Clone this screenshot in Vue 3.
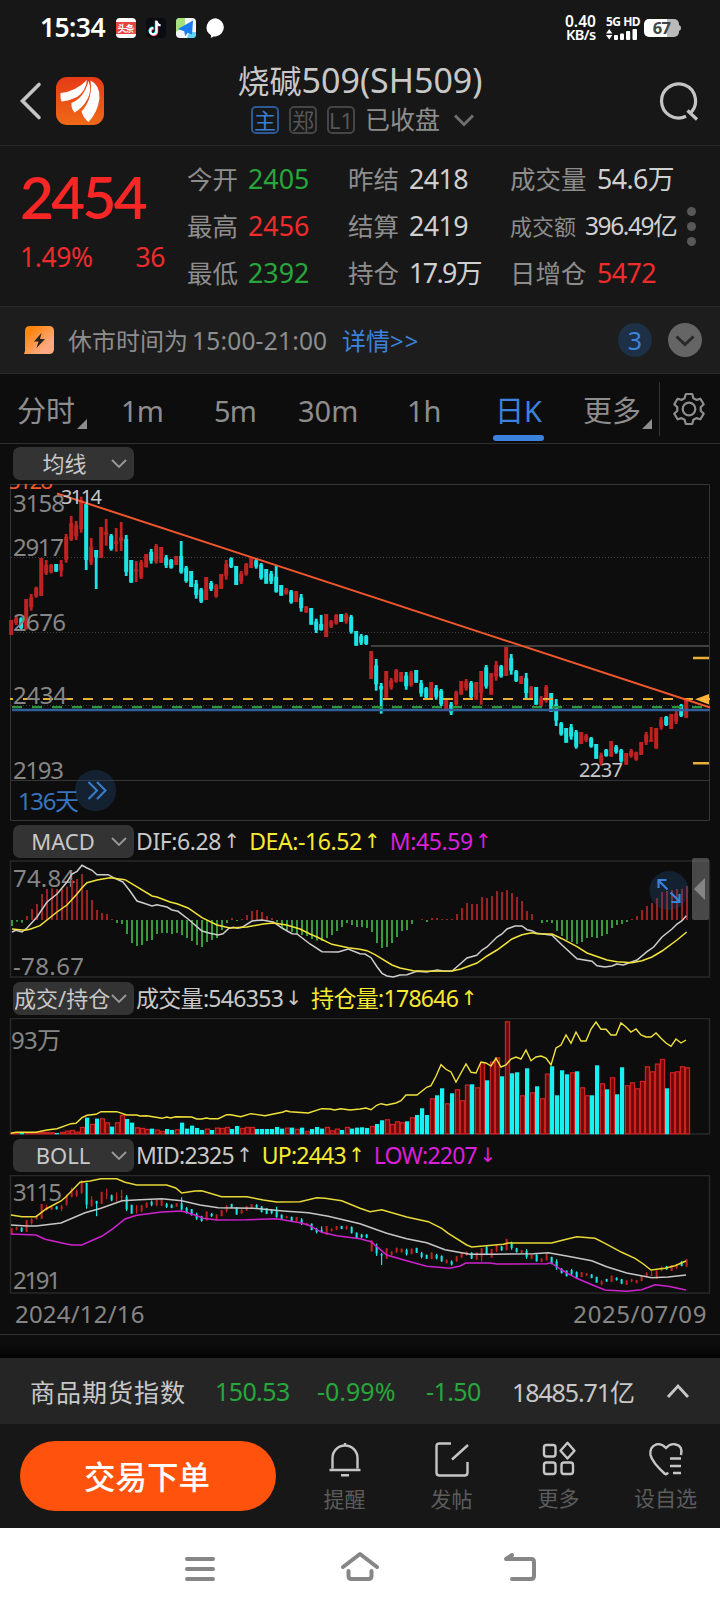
<script setup>
// [high, low, rising] per trading day, in thirds of a pixel below the panel origin
const raw = `420 465 R,408 435 R,412 448 C,357 448 R,342 392 R,320 353 R,234 348 R,240 285 R,252 280 R,252 275 C,240 290 R,162 248 R,108 183 R,123 180 R,50 158 R,72 270 C,174 255 R,210 327 C,141 234 R,117 197 R,162 212 C,144 215 R,126 213 R,165 288 C,240 308 C,243 306 R,240 297 R,222 262 R,207 251 C,192 251 R,201 249 R,225 264 C,237 266 C,228 255 R,183 281 C,258 308 C,273 321 C,300 356 C,324 369 C,291 360 R,303 333 C,312 353 R,282 327 R,240 299 R,232 264 C,258 315 C,273 312 R,249 287 R,234 264 R,235 266 C,249 299 C,267 311 C,273 312 C,255 338 C,315 347 C,324 344 R,330 371 C,333 366 R,342 395 C,378 399 R,384 434 C,416 459 C,405 452 C,402 471 R,420 444 R,402 434 R,402 426 C,399 431 R,405 461 C,453 497 C,462 495 C,465 495 C,513 597 R,537 632 C,609 701 C,573 653 R,594 629 R,567 608 R,576 605 R,576 629 C,573 620 R,570 608 C,600 650 C,621 656 C,606 656 R,615 659 C,627 678 C,660 688 R,666 705 C,632 677 R,603 644 R,597 632 R,603 656 C,606 659 R,573 674 R,555 626 C,579 644 R,543 602 R,555 593 C,501 588 R,522 584 C,570 606 C,588 612 R,579 654 C,618 657 R,621 674 C,648 680 R,615 668 R,639 695 C,657 738 C,726 767 C,744 788 C,732 779 C,750 806 C,756 792 R,762 786 R,771 803 C,792 836 C,818 857 R,807 830 C,783 830 R,795 821 C,807 848 C,819 854 R,807 833 R,815 842 R,786 825 R,756 795 R,741 785 R,744 806 R,711 749 R,708 738 C,702 747 R,693 732 R,672 711 C,657 714 R`
// days whose body is much shorter than the wick
const bodies = { 7: [255, 280], 10: [252, 272], 12: [130, 178], 15: [72, 240], 16: [200, 248], 17: [210, 232], 19: [155, 165], 21: [184, 192], 22: [172, 184], 25: [268, 274], 34: [228, 277], 53: [290, 335], 62: [432, 450], 74: [618, 628], 94: [573, 638], 128: [779, 785] }
const candles = raw.split(',').map((s, i) => {
  const [h, l, c] = s.split(' ')
  const hi = +h, lo = +l, pad = (lo - hi) * [0, 0.2, 0.1][i % 3]
  const [bt, bb] = bodies[i] || [hi + pad, lo - pad]
  return { x: 11.2 + 5 * i, hi: 480 + hi / 3, lo: 480 + lo / 3, bt: 480 + bt / 3, bb: 480 + bb / 3, up: c === 'R' }
})
const bollY = y => 1180 + (y - 496.7) * 0.3916

const hist = [-18,-5,-8,12,33,48,78,93,95,93,93,100,120,123,138,90,60,30,21,18,3,-9,-12,-42,-69,-78,-75,-63,-60,-42,-39,-39,-42,-39,-45,-54,-63,-75,-81,-66,-60,-54,-30,-9,6,-3,3,15,27,30,24,12,6,-8,-24,-30,-36,-42,-45,-48,-57,-62,-63,-54,-45,-33,-21,-9,-15,-21,-21,-24,-36,-69,-84,-81,-69,-51,-33,-30,-12,0,3,-6,6,6,3,3,3,18,36,51,48,48,69,66,72,87,84,90,81,69,57,27,18,0,-9,-6,-9,-33,-48,-60,-66,-72,-66,-54,-51,-54,-48,-42,-24,-15,-12,-6,3,12,30,42,51,66,84,87,90,93,93,102]
const vols = [5,5,4,5,6,6,7,7,6,4,7,11,13,8,22,50,31,47,48,36,23,36,58,46,35,21,19,16,17,14,10,16,13,15,35,17,26,19,13,17,13,20,19,22,16,25,19,22,22,16,16,16,16,22,17,20,20,16,20,10,16,22,17,22,12,17,13,22,17,20,21,19,25,31,42,45,31,39,36,39,51,58,78,58,108,117,138,93,123,135,102,149,150,141,216,162,218,231,174,339,183,186,117,198,126,144,108,182,204,117,192,180,186,189,141,117,117,207,153,135,171,120,201,147,156,138,160,204,189,212,226,138,186,189,204,201]
const volUp = i => (i === 112 || i === 134 ? true : candles[i].up)

// joins "x,y" pairs of the left and right half of a panel into polyline points
function line(left, right, y0) {
  const conv = (s, dx) => s.trim().split(' ').map(p => { const [x, y] = p.split(',').map(Number); return `${(dx + x / 3).toFixed(1)},${(y0 + y / 3).toFixed(1)}` })
  return [...conv(left, 0), ...conv(right, 360)].join(' ')
}
const dif = line('36,336 48,331 66,336 81,324 111,291 141,246 171,222 201,186 216,162 231,154 246,136 261,144 276,151 291,164 324,164 345,175 369,186 390,213 411,243 432,250 456,258 471,254 501,261 516,270 534,274 564,297 606,333 630,340 654,345 669,341 687,325 700,322 712,325 726,322 756,303 786,300 820,306 846,324 876,341 891,342 930,372 966,395 1015,396 1045,387',
  '0,401 15,402 33,413 51,440 66,460 81,468 100,471 120,465 141,464 170,454 200,456 232,450 250,453 276,453 291,440 321,414 350,406 366,390 381,381 411,351 426,342 441,327 465,318 486,318 501,329 516,332 531,340 576,346 606,375 651,416 696,424 711,437 735,441 756,438 770,432 790,435 831,420 861,395 881,381 906,351 936,327 951,312 966,302 979,287', 820)
const dea = line('36,327 75,331 90,328 120,317 171,276 201,255 231,222 246,203 261,188 291,180 330,173 375,179 405,197 456,228 471,231 510,246 531,251 564,264 606,293 651,315 690,324 740,321 790,312 820,309 860,315 900,327 930,342 951,351 996,373 1045,383',
  '0,388 21,392 45,404 96,435 120,444 160,452 200,454 276,453 303,447 351,429 381,408 411,390 456,357 486,344 516,338 531,341 576,342 606,356 651,380 681,399 741,420 771,425 816,428 846,422 876,411 906,393 951,360 980,336', 820)
const oi = line('33,355 48,352 108,352 141,345 171,341 213,326 228,325 246,308 261,301 288,298 303,290 350,290 380,300 410,300 420,303 440,302 486,310 500,306 512,309 527,305 575,306 590,312 605,312 619,309 630,311 655,311 680,299 692,299 722,305 753,296 795,302 850,291 858,287 870,290 925,294 965,281 990,282 1004,285 1022,281 1050,285',
  '0,282 18,279 33,284 50,271 63,266 80,270 108,264 123,257 138,240 171,240 200,217 213,212 228,184 243,149 258,163 273,171 288,201 303,174 318,147 333,172 348,174 363,141 378,144 393,153 408,130 423,156 438,150 453,132 468,126 483,132 498,105 513,137 528,126 543,123 558,129 573,150 588,99 603,90 618,60 633,85 648,51 663,78 678,78 693,42 708,21 723,43 738,43 753,60 768,60 783,24 798,36 813,51 828,42 843,60 858,66 873,66 888,54 903,70 918,84 933,94 948,72 963,84 978,75', 1015)
const up = line('33,600 66,605 108,605 138,582 183,558 198,545 240,502 270,498 303,491 350,491 375,502 410,510 500,510 527,519 545,534 585,528 605,527 665,545 740,545 790,555 830,561 900,560 950,548 975,550 1025,557',
  '0,580 30,590 65,584 140,606 205,620 245,640 265,655 320,690 335,696 430,688 445,684 575,684 610,675 650,665 705,670 735,685 785,712 825,730 850,747 873,765 915,760 945,752 978,738', 1015)
const mid = line('33,630 80,633 108,633 183,624 255,593 303,580 366,557 420,554 485,551 545,557 600,570 655,578 760,580 850,588 925,593 985,604',
  '0,626 80,655 140,671 200,683 255,704 330,718 400,718 520,716 565,713 620,723 695,737 740,755 800,774 875,788 925,786 978,780', 1015)
const low = line('33,657 108,660 135,673 200,687 215,690 245,690 305,664 340,640 375,612 410,601 485,591 545,588 585,600 610,610 650,615 740,614 830,611 900,623 925,630 965,652 1010,662',
  '0,671 33,680 80,720 140,737 200,754 270,760 300,753 318,744 390,744 410,747 560,746 573,743 605,765 650,790 705,813 735,825 800,829 845,824 885,809 925,814 978,825', 1015)
</script>

<template>
  <div class="phone">
    <div class="status">
      <span class="clock">15:34</span>
      <svg class="apps" width="112" height="22" viewBox="115 17 112 22">
        <rect x="116" y="18" width="20" height="20" rx="4" fill="#fff"/><rect x="116" y="22" width="20" height="12" fill="#e8443f"/>
        <text x="117.5" y="31.8" font-size="9" font-weight="700" fill="#fff" textLength="17">头条</text>
        <rect x="146" y="18" width="20" height="20" rx="4" fill="#0b0b14"/>
        <g fill="none" stroke-width="2.2"><path d="M156.4 21v10.2a3.2 3.2 0 1 1-3.2-3.2" stroke="#fe2c55" transform="translate(.8 .7)"/><path d="M156.4 21v10.2a3.2 3.2 0 1 1-3.2-3.2M156.4 21q.6 4 4.2 4.4" stroke="#25f4ee" transform="translate(-.5 -.4)"/><path d="M156.6 21v10.2a3.2 3.2 0 1 1-3.2-3.2M156.4 21q.6 4 4.2 4.4" stroke="#fff"/></g>
        <rect x="176" y="18" width="20" height="20" rx="4" fill="#f4f7fa"/><path d="M180 18h5v8l-9 6V22q0-4 4-4z" fill="#a6e07c"/><path d="M189 32h7v2q0 4-4 4h-5z" fill="#64d4f5"/><path d="M193 20.5 178 29l6.2 2.2 1 5 2.5-3.5 4.3 1.8z" fill="#1c7cf2"/>
        <path d="M216 18.200a9.900 9.300 0 0 1 0 18.200q-1.500 0-2.500 0-1.500 1.200-3 1.400 1-1.500.500-2.600a10 9.300 0 0 1 5-17z" fill="#fff"/>
      </svg>
      <div class="net"><span>0.40</span><span>KB/s</span></div>
      <div class="cell"><span>5G HD</span>
        <svg width="32" height="11" viewBox="0 0 32 11" fill="#fff"><path d="M0 4.500 3.200 0l3.200 4.500zM0 6h6.400L3.200 10.500z"/><rect x="8" y="6" width="4" height="5" rx="1"/><rect x="14" y="4.500" width="4" height="6.500" rx="1"/><rect x="20" y="2" width="4.200" height="9" rx="1"/><rect x="26.500" y="0" width="4.500" height="11" rx="1"/></svg>
      </div>
      <div class="battery">67</div>
    </div>

    <header class="head">
      <svg class="back" width="24" height="40" viewBox="0 0 24 40"><path d="M20 3.500 3.500 20 20 36.500" fill="none" stroke="#c4c4c4" stroke-width="3.600" stroke-linecap="round"/></svg>
      <svg class="logo" width="48" height="48" viewBox="0 0 48 48">
        <defs><linearGradient id="lg" x1="0" y1="0" x2="0" y2="1"><stop offset="0" stop-color="#e63a17"/><stop offset="1" stop-color="#ee6a17"/></linearGradient></defs>
        <rect width="48" height="48" rx="11" fill="url(#lg)"/>
        <path d="M4.500 16Q19 15 31 3 30 14 21 20 12 24 5.500 24.500Q4 21 4.500 16z" fill="#fff"/>
        <path d="M15.500 26Q28 21 32.500 4q3.500 8-.5 17-5 10-13.500 14.500-3.500-4-3-9.500z" fill="#fff"/>
        <path d="M25.500 34.500Q37 22 34.500 3.500 44 8 43.500 21 42 35 32.500 45q-5.500-4.500-7-10.500z" fill="#fff"/>
      </svg>
      <div class="title">
        <div class="name">烧碱<b>509(SH509)</b></div>
        <div class="sub"><i class="on">主</i><i>郑</i><i>L1</i><span>已收盘</span>
          <svg width="22" height="14" viewBox="0 0 22 14"><path d="m2 2.500 9 9 9-9" fill="none" stroke="#6e6e6e" stroke-width="3"/></svg>
        </div>
      </div>
      <svg class="search" width="42" height="42" viewBox="0 0 42 42"><path d="M27 35.200A17 17 0 1 1 31.500 32M28.500 29.500l9.500 9" fill="none" stroke="#c4c4c4" stroke-width="3.200"/></svg>
    </header>

    <section class="quote">
      <div class="price"><strong>2454</strong><p><span>1.49%</span><span>36</span></p></div>
      <dl class="c1"><div><dt>今开</dt><dd class="g">2405</dd></div><div><dt>最高</dt><dd class="r">2456</dd></div><div><dt>最低</dt><dd class="g">2392</dd></div></dl>
      <dl class="c2"><div><dt>昨结</dt><dd>2418</dd></div><div><dt>结算</dt><dd>2419</dd></div><div><dt>持仓</dt><dd class="narrow">17.9万</dd></div></dl>
      <dl class="c3"><div><dt>成交量</dt><dd>54.6万</dd></div><div class="tight"><dt>成交额</dt><dd>396.49亿</dd></div><div><dt>日增仓</dt><dd class="r">5472</dd></div></dl>
      <div class="dots"><i></i><i></i><i></i></div>
    </section>

    <section class="notice">
      <svg width="30" height="28" viewBox="0 0 30 28"><defs><linearGradient id="ng" x1="0" y1="0" x2="1" y2="1"><stop offset=".2" stop-color="#ff8610"/><stop offset=".75" stop-color="#ffa982"/></linearGradient></defs><path d="M6 0h19q5 0 5 5v18q0 5-5 5H0l1-3V5q0-5 5-5z" fill="url(#ng)"/><path d="M17.500 7 10 15.500h4.500L12.500 22 21 13h-5z" fill="#222"/></svg>
      <span class="msg">休市时间为<em>15:00-21:00</em></span><span class="more">详情<em>&gt;&gt;</em></span>
      <span class="count">3</span>
      <svg class="fold" width="34" height="34" viewBox="0 0 34 34"><circle cx="17" cy="17" r="17" fill="#656565"/><path d="m8.500 13.500 8.500 8 8.500-8" fill="none" stroke="#282828" stroke-width="3"/></svg>
    </section>

    <nav class="tabs">
      <span class="t t1">分时<u></u></span><span class="t t2">1m</span><span class="t t3">5m</span><span class="t t4">30m</span><span class="t t5">1h</span><span class="t t6">日K</span><span class="t t7">更多<u></u></span>
      <svg class="gear" width="32" height="34" viewBox="-16 -17 32 34" fill="none" stroke="#8e8e8e" stroke-width="2.200" stroke-linejoin="round"><path d="M-3.200-15h6.400l1.200 4.200 3 1.700 4-1.200 3.300 5.600-3 3v3.400l3 3-3.300 5.600-4-1.200-3 1.700L3.200 15h-6.400l-1.200-4.200-3-1.700-4 1.200-3.300-5.600 3-3v-3.400l-3-3 3.300-5.600 4 1.200 3-1.700z"/><circle r="6.300"/></svg>
    </nav>

    <div class="bar first"><div class="pick">均线<svg width="16" height="10" viewBox="0 0 16 10"><path d="m1 1 7 7 7-7"/></svg></div></div>

    <svg class="chart" width="720" height="340" viewBox="0 482 720 340">
      <path d="M10.500 820.500v-336h699v336z" fill="none" stroke="#363636"/>
      <path d="M10.500 780.500h699" stroke="#363636"/>
      <path d="M11 557.500h698M11 632.500h698M11 705.500h698" stroke="#3d3d3d" stroke-dasharray="1 2"/>
      <path d="M371 646h338" stroke="#404040" stroke-width="2"/>
      <g v-for="(c, i) in candles" :key="i" :fill="c.up ? '#bf2222' : '#1de4e4'">
        <rect :x="c.x - 1.400" :y="c.hi" width="2.800" :height="c.lo - c.hi"/>
        <rect :x="c.x - 2" :y="c.bt" width="4" :height="c.bb - c.bt"/>
      </g>
      <path d="M10 699h700" stroke="#eab038" stroke-width="2.200" stroke-dasharray="10 10" stroke-dashoffset="7"/>
      <path d="M12 710h698" stroke="#315f9c" stroke-width="2.400"/>
      <path d="M12 707.200h698" stroke="#2c963a" stroke-width="2.200" stroke-dasharray="10 10"/>
      <path d="M693 658h16M693 763.300h16" stroke="#eab038" stroke-width="2.400"/>
      <path d="M695 699.300 709 694v10.500z" fill="#ffb638"/>
      <path d="M57 493.500 710 707.500" stroke="#f0572c" stroke-width="2"/>
      <g class="lab">
        <text x="13" y="512" textLength="52">3158</text><text x="13" y="556" textLength="51">2917</text><text x="13" y="631" textLength="53">2676</text><text x="13" y="704" textLength="54">2434</text><text x="13" y="779" textLength="51">2193</text>
      </g>
      <text class="mark" x="61" y="503.500" textLength="41">3114</text>
      <text class="mark" x="579" y="776.500" textLength="44">2237</text>
      <clipPath id="top"><rect x="10" y="484" width="60" height="20"/></clipPath>
      <text class="hot" x="8" y="488.500" textLength="45" clip-path="url(#top)">3128</text>
      <circle cx="95.500" cy="790.500" r="20.700" fill="#235086" fill-opacity=".3"/>
      <path d="m88.500 782 8.500 8.500-8.500 8.500M97 782l8.500 8.500-8.500 8.500" fill="none" stroke="#3a7ed2" stroke-width="2"/>
      <text class="days" x="18" y="810" textLength="61">136天</text>
    </svg>

    <div class="bar b2"><div class="pick">MACD<svg width="16" height="10" viewBox="0 0 16 10"><path d="m1 1 7 7 7-7"/></svg></div>
      <span class="v w">DIF:6.28<s>↑</s></span><span class="v y">DEA:-16.52<s>↑</s></span><span class="v m">M:45.59<s>↑</s></span></div>

    <svg class="chart" width="720" height="118" viewBox="0 860 720 118">
      <path d="M10.500 861h699v116h-699z" fill="none" stroke="#292929" stroke-width="1.500"/>
      <text class="lab" x="13" y="887" textLength="62">74.84</text>
      <text class="lab" x="13" y="974.500" textLength="71">-78.67</text>
      <rect v-for="(h, i) in hist" :key="i" :x="11 + 5 * i" :y="h > 0 ? 920 - h / 3 : 920" width="2" :height="Math.abs(h) / 3" :fill="h > 0 ? '#9b2222' : '#389a3a'"/>
      <polyline :points="dif" fill="none" stroke="#cdcdcd" stroke-width="1.500"/>
      <polyline :points="dea" fill="none" stroke="#f2e33a" stroke-width="1.500"/>
      <circle cx="669" cy="890.500" r="19.500" fill="#235086" fill-opacity=".3"/>
      <path d="m667.500 889.500-9-9m0 7.500V880h8M670.500 892.500l9 9m0-7.500v8h-8" fill="none" stroke="#3a82dc" stroke-width="2.200"/>
    </svg>
    <div class="handle"></div>

    <div class="bar b3"><div class="pick wide">成交/持仓<svg width="16" height="10" viewBox="0 0 16 10"><path d="m1 1 7 7 7-7"/></svg></div>
      <span class="v w">成交量:546353<s>↓</s></span><span class="v y">持仓量:178646<s>↑</s></span></div>

    <svg class="chart" width="720" height="118" viewBox="0 1018 720 118">
      <path d="M10.500 1018.500h699V1134h-699z" fill="none" stroke="#292929" stroke-width="1.500"/>
      <text class="lab" x="11" y="1049" textLength="50">93万</text>
      <template v-for="(v, i) in vols" :key="i">
        <rect v-if="volUp(i)" :x="10.500 + 5 * i" :y="1134.800 - v / 3" width="4" :height="Math.max(v / 3 - 1, .5)" fill="#6b0808" stroke="#cb2222" stroke-width="1.300"/>
        <rect v-else :x="10 + 5 * i" :y="1134.300 - v / 3" width="4.200" :height="v / 3" fill="#16f2f2"/>
      </template>
      <polyline :points="oi" fill="none" stroke="#f2e33a" stroke-width="1.400"/>
    </svg>

    <div class="bar b4"><div class="pick">BOLL<svg width="16" height="10" viewBox="0 0 16 10"><path d="m1 1 7 7 7-7"/></svg></div>
      <span class="v w">MID:2325<s>↑</s></span><span class="v y">UP:2443<s>↑</s></span><span class="v m">LOW:2207<s>↓</s></span></div>

    <svg class="chart" width="720" height="119" viewBox="0 1175 720 119">
      <path d="M10.500 1175.500h699V1293h-699z" fill="none" stroke="#292929" stroke-width="1.500"/>
      <text class="lab" x="13" y="1201" textLength="49">3115</text>
      <text class="lab" x="13" y="1289" textLength="48">2191</text>
      <g v-for="(c, i) in candles" :key="i" :fill="c.up ? '#bf2222' : '#1de4e4'">
        <rect :x="c.x - .2" :y="bollY(c.hi)" width="1.200" :height="bollY(c.lo) - bollY(c.hi)"/>
        <rect :x="c.x - .6" :y="bollY(c.bt)" width="2" :height="bollY(c.bb) - bollY(c.bt)"/>
      </g>
      <polyline :points="mid" fill="none" stroke="#c6c6c6" stroke-width="1.500"/>
      <polyline :points="up" fill="none" stroke="#e8d936" stroke-width="1.500"/>
      <polyline :points="low" fill="none" stroke="#cf22cf" stroke-width="1.500"/>
    </svg>

    <div class="dates"><span>2024/12/16</span><span>2025/07/09</span></div>
    <div class="shade"></div>

    <section class="index">
      <span class="ix1">商品期货指数</span><span class="ix2 g">150.53</span><span class="ix3 g">-0.99%</span><span class="ix4 g">-1.50</span><span class="ix5">18485.71亿</span>
      <svg width="24" height="16" viewBox="0 0 24 16"><path d="M2 14 12 3l10 11" fill="none" stroke="#c8c8c8" stroke-width="2.800"/></svg>
    </section>

    <footer class="actions">
      <button>交易下单</button>
      <div class="act"><svg width="36" height="36" viewBox="0 0 36 36"><path d="M18 2v3M5.500 27.500V17a12.500 12.500 0 0 1 25 0v10.500M2.500 29h31M14 34.300h8"/></svg><span>提醒</span></div>
      <div class="act"><svg width="36" height="36" viewBox="0 0 36 36"><path d="M17 2.500H5.500q-3 0-3 3v26q0 3 3 3h25q3 0 3-3V21M34 4 18 18.500"/></svg><span>发帖</span></div>
      <div class="act up"><svg width="36" height="36" viewBox="0 0 36 36"><rect x="3" y="4" width="11.500" height="11.500" rx="2.500"/><path d="m26.500 1.800 7 8-7 7.700-7-7.700z" stroke-linejoin="round"/><rect x="3" y="21.500" width="11.500" height="11.500" rx="2.500"/><rect x="20.500" y="21.500" width="11.500" height="11.500" rx="2.500"/></svg><span>更多</span></div>
      <div class="act up"><svg width="36" height="36" viewBox="0 0 36 36"><path d="M33 14Q35 5 28 3.500 22.500 2 18 7 13 2 8 3.500 1.500 6 2.500 14 4 21 17 33q1.500.8 3-1.500M22 17.500h11M22 25h11M25 32h8"/></svg><span>设自选</span></div>
    </footer>

    <div class="sys">
      <svg width="720" height="84" viewBox="0 1528 720 84" fill="none" stroke="#868686" stroke-width="4" stroke-linecap="round" stroke-linejoin="round"><path d="M187 1559h26M187 1569h26M187 1579h26"/><path d="m343 1567 17-13 17 13M348.500 1571v5q0 3 3 3h17q3 0 3-3v-5"/><path d="M512 1579h19q3 0 3-3v-14q0-3-3-3h-25l6-4"/></svg>
    </div>
  </div>
</template>

<style>
body { background: #0d0d0d; }
</style>
<style scoped>
* { box-sizing: border-box; }
.phone { width: 720px; height: 1612px; overflow: hidden; position: relative; background: #0d0d0d; color: #c8c8c8; font-family: "Noto Sans", "Noto Sans CJK SC", sans-serif; white-space: nowrap; display: flex; flex-direction: column; }
.phone > * { flex: none; }
em, i, b { font-style: normal; font-weight: 400; }
s, u { text-decoration: none; }
.g { color: #27a73b !important; } .r { color: #ef2b2b !important; }
.w { color: #c8c8c8; } .y { color: #f8ea30; } .m { color: #db1fdb; }

.status { height: 56px; background: #171717; display: flex; align-items: center; padding: 0 39px 0 40px; color: #fff; }
.clock { width: 75px; font-size: 26.500px; font-weight: 600; line-height: 54px; height: 56px; letter-spacing: -.6px; }
.net { margin-left: 338px; width: 41px; display: flex; flex-direction: column; font-size: 15.500px; font-weight: 600; line-height: 13px; align-items: flex-start; }
.net span:last-child { font-size: 14.500px; letter-spacing: -.6px; padding-left: 1px; }
.cell { width: 38px; font-size: 12px; font-weight: 700; line-height: 12px; letter-spacing: -.5px; display: flex; flex-direction: column; gap: 1px; }
.battery { position: relative; width: 35px; height: 18px; border-radius: 5px; background: linear-gradient(90deg, #fff 67%, #bababa 67%); color: #444; font-size: 16.500px; font-weight: 700; line-height: 18px; text-align: center; letter-spacing: -.8px; }
.battery::after { content: ""; position: absolute; right: -2px; top: 6px; width: 3px; height: 6px; border-radius: 0 3px 3px 0; background: #bababa; }

.head { height: 90px; background: #171717; border-bottom: 1px solid #292929; display: flex; padding: 0 19px; }
.back { margin-top: 25px; }
.logo { margin: 21px 0 0 13px; }
.title { width: 512px; display: flex; flex-direction: column; align-items: center; }
.name { font-size: 32px; line-height: 46px; height: 46px; margin-top: 1px; }
.name b { font-size: 34px; }
.sub { display: flex; align-items: center; height: 32px; margin: 1px 0 0 6px; }
.sub i { width: 28px; height: 28px; border: 2px solid #454545; border-radius: 5px; color: #565656; font-size: 22px; line-height: 24px; text-align: center; margin-right: 10px; }
.sub i.on { border-color: #2c5a96; color: #3b7ed0; }
.sub span { font-size: 25px; line-height: 30px; margin-top: -2px; color: #8d8d8d; margin-right: 13px; }
.search { margin: 25px 0 0 43px; flex: none; }

.quote { height: 161px; background: #171717; border-bottom: 1px solid #292929; display: flex; padding-left: 20px; }
.price { width: 167px; color: #f92626; }
.price strong { display: block; font-family: Lato, "Noto Sans", sans-serif; font-size: 58.500px; font-weight: 600; line-height: 70px; margin-top: 15px; letter-spacing: -2.700px; }
.price p { margin: 6px 0 0; font-size: 26.500px; line-height: 40px; display: flex; justify-content: space-between; padding-right: 22px; color: #ef2b2b; letter-spacing: -.4px; }
dl { margin: 9px 0 0; }
dl div { display: flex; height: 47px; line-height: 47px; align-items: baseline; }
dt { font-size: 25.500px; color: #8d8d8d; } dd { margin: 0; font-size: 26.800px; }
.c1 { width: 161px; } .c2 { width: 162px; } .c1 dt { width: 61px; } .c2 dt { width: 61px; }
.c2 dd, .c3 dd { letter-spacing: -.6px; color: #d0d0d0; }
.c2 dd.narrow { letter-spacing: -1.600px; }
.c3 { width: 177px; } .c3 dt { width: 87px; }
.tight dt { font-size: 22px; width: 75px; } .c3 .tight dd { font-size: 24.500px; letter-spacing: -1.400px; }
.dots { width: 10px; display: flex; flex-direction: column; gap: 6px; padding-top: 61px; }
.dots i { width: 9px; height: 9px; border-radius: 50%; background: #585858; }

.notice { height: 67px; background: #1d1d1d; border-bottom: 1px solid #292929; display: flex; align-items: center; padding: 0 18px 0 24px; color: #8d8d8d; font-size: 24px; }
.msg, .more { padding-bottom: 2px; }
.msg { margin-left: 14px; width: 274px; } .msg em { font-size: 24.500px; margin-left: 4px; letter-spacing: .2px; }
.more { color: #3b82dd; } .more em { letter-spacing: 1px; }
.count { margin-left: auto; margin-right: 16px; width: 34px; height: 34px; border-radius: 50%; background: #1d3046; color: #3b82dd; font-size: 25px; line-height: 34px; text-align: center; }

.tabs { height: 70px; border-bottom: 1px solid #303030; display: flex; padding-left: 17px; color: #8d8d8d; font-size: 29px; line-height: 73px; }
.t { position: relative; }
.t1 { width: 104px; } .t2 { width: 93px; } .t3 { width: 84px; } .t4 { width: 109px; } .t5 { width: 88px; } .t6 { width: 88px; } .t7 { width: 77px; }
.t2, .t3 { letter-spacing: -.8px; }
.t6 { color: #3b82dd; }
.t6::after { content: ""; position: absolute; left: -2px; bottom: 2px; width: 51px; height: 6px; border-radius: 3px; background: #3b82dd; }
.t u { position: absolute; top: 45px; left: 60px; border-left: 10px solid transparent; border-bottom: 10px solid #8d8d8d; }
.t7 { border-right: 1.500px solid #333; height: 54px; margin-top: 8px; line-height: 57px; } .t7 u { top: 37px; left: 59px; }
.gear { margin: 18px 0 0 13px; }

.bar { display: flex; align-items: center; padding-left: 13px; font-size: 23px; }
.bar.first { height: 38px; padding-top: 1px; } .b2 { height: 38px; } .b3 { height: 40px; } .b4 { height: 39px; }
.pick { position: relative; width: 121px; height: 33px; border-radius: 7px; background: #333; color: #c8c8c8; font-size: 22px; line-height: 32px; padding-right: 21px; text-align: center; margin-right: 2px; }
.first .pick { padding-right: 18px; }
.pick svg { position: absolute; right: 7px; top: 12px; fill: none; stroke: #989898; stroke-width: 1.900; }
.pick.wide { text-align: left; padding-left: 1px; letter-spacing: 0; }
.v { margin-right: 10px; display: flex; line-height: 33px; letter-spacing: -.4px; }
.b3 .v { letter-spacing: -.7px; } .b4 .v { letter-spacing: -.8px; }
.v s { width: 15px; display: flex; justify-content: center; font-size: 20px; font-family: "DejaVu Sans"; margin-left: 3px; }

.chart { display: block; }
.lab { font-size: 24px; fill: #868686; } .mark { font-size: 20px; fill: #c8c8c8; } .hot { font-size: 22px; fill: #f0572c; } .days { font-size: 24px; fill: #3873bd; }
.handle { position: absolute; left: 691.500px; top: 858px; width: 17px; height: 62px; border-radius: 2px; background: rgba(110, 110, 110, .62); }
.handle::after { content: ""; position: absolute; left: 2px; top: 20px; border: 11px solid transparent; border-left: 0; border-right-color: #858585; }

.dates { height: 41px; border-bottom: 1px solid #333; display: flex; justify-content: space-between; padding: 0 13px 0 15px; font-size: 24px; line-height: 40px; color: #868686; letter-spacing: .2px; }
.dates span:last-child { letter-spacing: .6px; }
.shade { height: 23px; background: linear-gradient(#0d0d0d 40%, #030303); }
.index { height: 66px; background: #252525; display: flex; align-items: center; padding-left: 30px; font-size: 25px; letter-spacing: -.6px; }
.ix1 { width: 185px; letter-spacing: 1px; } .ix2 { width: 102px; } .ix3 { width: 109px; letter-spacing: 0; } .ix4 { width: 86px; } .ix5 { width: 154px; letter-spacing: -1.100px; }
.actions { height: 104px; background: #171717; display: flex; padding: 17px 0 0 20px; }
.actions button { width: 256px; height: 70px; border: 0; border-radius: 35px; background: #ff530d; color: #fff; font: 500 31.500px "Noto Sans CJK SC", sans-serif; padding: 0 2px 3px 0; }
.act { width: 107px; display: flex; flex-direction: column; align-items: center; font-size: 21px; color: #5c5c5c; }
.act:nth-child(2) { margin-left: 15px; }
.act svg { fill: none; stroke: #c6c6c6; stroke-width: 2.400; }
.act span { line-height: 30px; margin-top: 7px; } .act.up span { margin-top: 6px; }
.sys { height: 84px; background: #fff; } .sys svg { display: block; }
</style>
